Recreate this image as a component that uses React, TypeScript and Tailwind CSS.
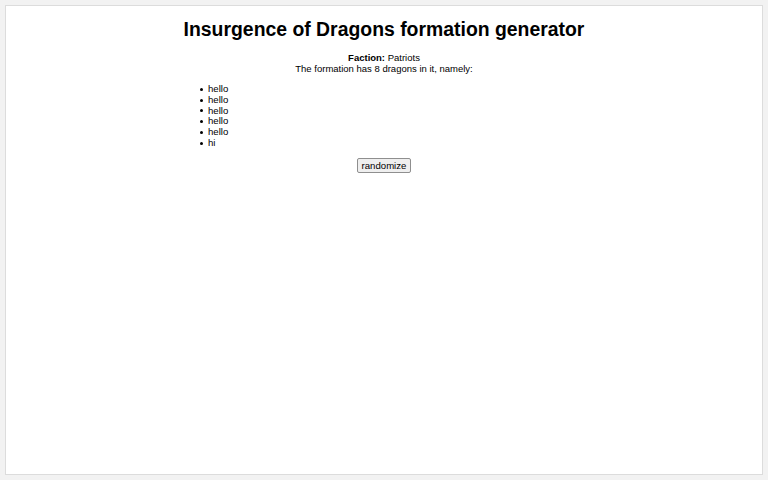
import React from "react";

const dragons = ["hello", "hello", "hello", "hello", "hello", "hi"];

export default function App() {
  return (
    <div className="w-[768px] h-[480px] bg-[#f2f2f2] p-[5px] font-['Liberation_Sans',Arial,sans-serif] text-black">
      <div className="h-full bg-white border border-[#dcdcdc] flex flex-col items-center">
        <h1 className="mt-[9px] text-[19.4px] leading-[28px] font-bold">
          Insurgence of Dragons formation generator
        </h1>
        <div className="mt-[9px] text-[9.5px] leading-[11px] text-center">
          <div>
            <b>Faction:</b> Patriots
          </div>
          <div>The formation has 8 dragons in it, namely:</div>
        </div>
        <div className="w-[400px] mt-[10px]">
          <ul className="pl-[16px] text-[9.6px] leading-[10.8px]">
            {dragons.map((d, i) => (
              <li key={i} className="flex items-center">
                <span className="w-[3px] h-[3px] rounded-full bg-black mr-[5px]" />
                {d}
              </li>
            ))}
          </ul>
        </div>
        <button className="mt-[9px] px-[4px] h-[15px] text-[9.6px] leading-[13px] border border-[#8f8f8f] rounded-[2px] bg-[#efefef]">
          randomize
        </button>
      </div>
    </div>
  );
}
